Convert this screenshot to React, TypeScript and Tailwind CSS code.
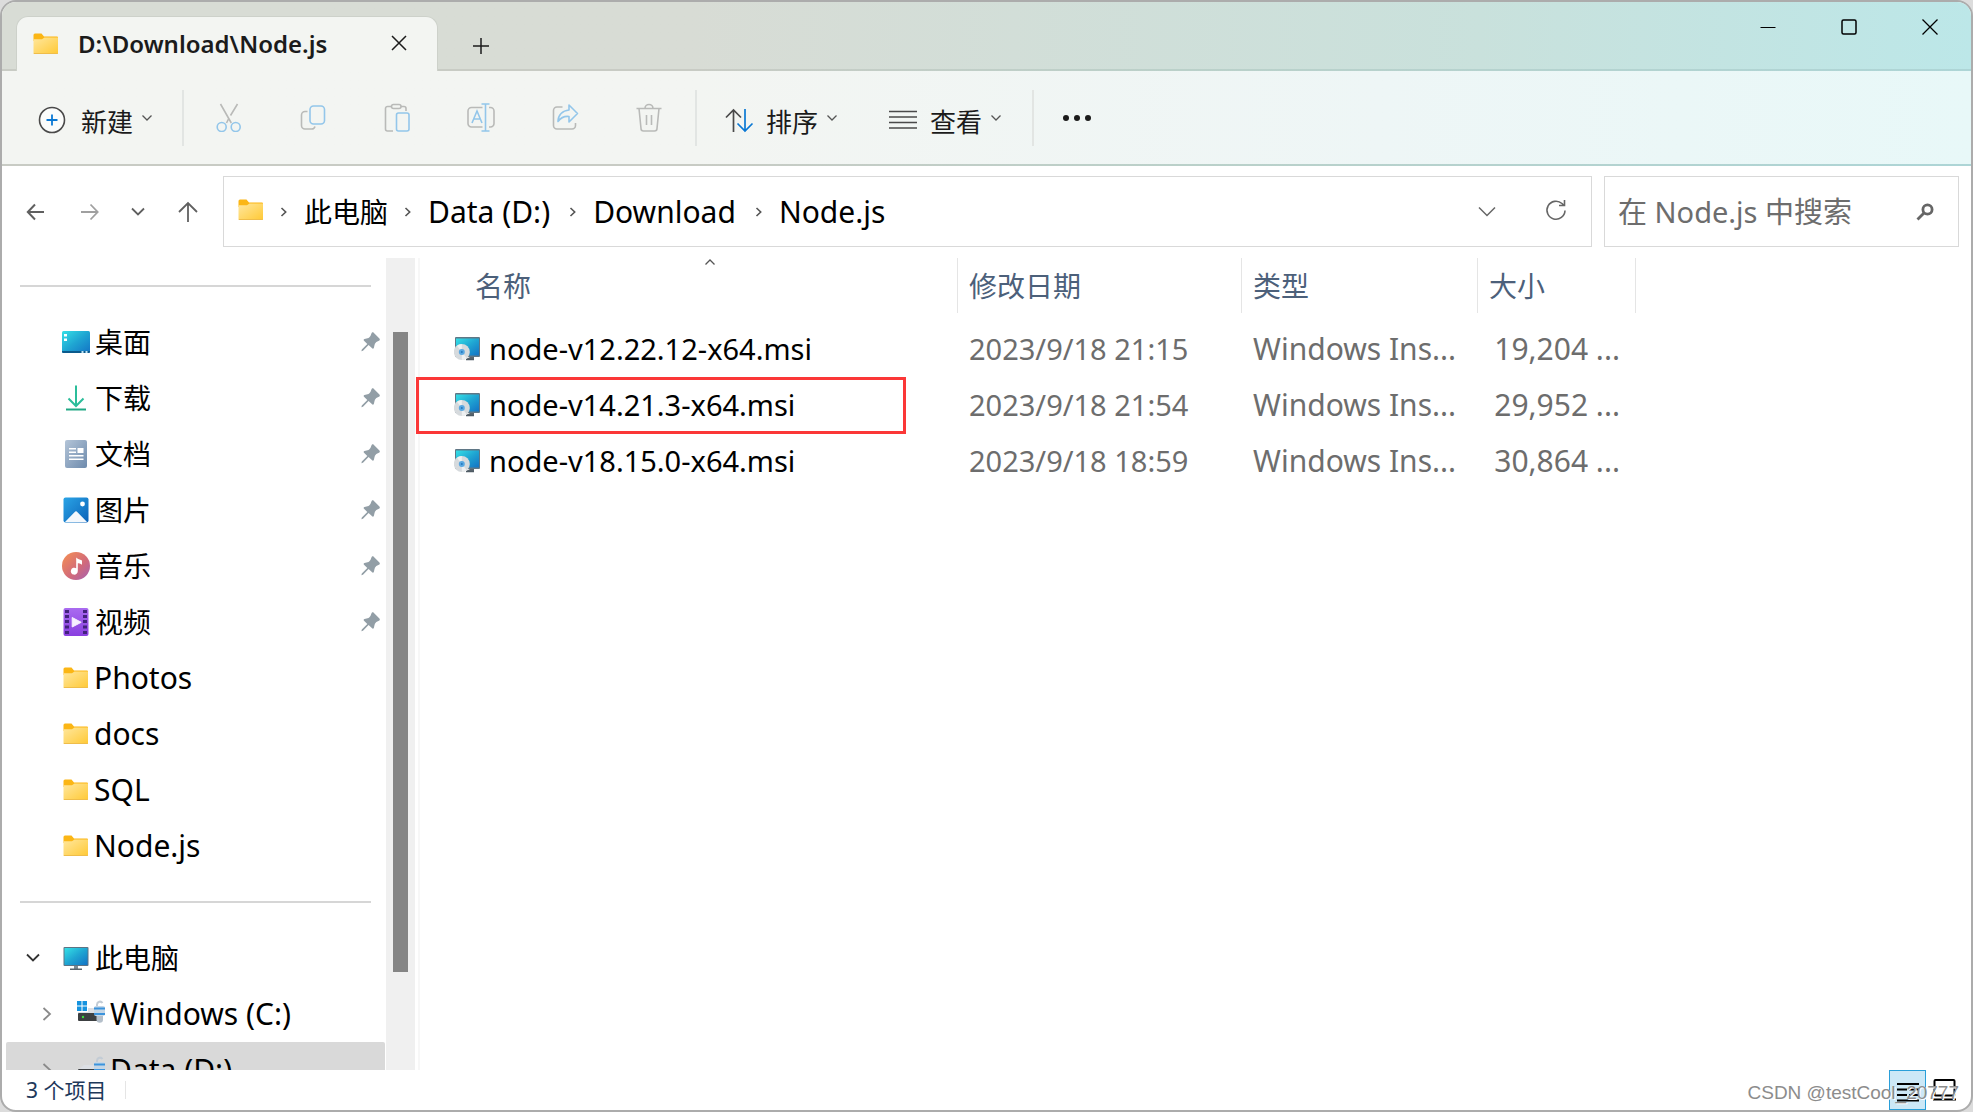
import React from 'react';

type P = { className?: string };

const Folder = ({ className = '' }: P) => (
  <svg className={className} width="26" height="22" viewBox="0 0 26 22" aria-hidden="true">
    <defs>
      <linearGradient id="fold" x1="0" y1="0" x2="1" y2="1">
        <stop offset="0" stopColor="#ffe79e" />
        <stop offset="1" stopColor="#ffc935" />
      </linearGradient>
    </defs>
    <path d="M0.5 3V2a1.5 1.5 0 0 1 1.500-1.500h6.500l2.500 3h13a1 1 0 0 1 1 1V8H.5z" fill="#fbb615" />
    <path d="M.5 6.200h8.500l2.500-1.700h13.500v15.500a1 1 0 0 1-1 1H1.500a1 1 0 0 1-1-1z" fill="url(#fold)" />
    <path d="M.8 20.500h24" stroke="#efbd4a" strokeWidth="1" />
  </svg>
);

const DesktopIcon = () => (
  <svg width="28" height="28" viewBox="0 0 28 28" aria-hidden="true">
    <defs>
      <linearGradient id="desk" x1="0" y1="0" x2="1" y2="1">
        <stop offset="0" stopColor="#35e0e6" />
        <stop offset=".5" stopColor="#1fa5d2" />
        <stop offset="1" stopColor="#1373c5" />
      </linearGradient>
    </defs>
    <rect x="0" y="3" width="28" height="22" rx="1.500" fill="url(#desk)" />
    <path d="M0 23h28v.5a1.500 1.500 0 0 1-1.500 1.500h-25A1.500 1.500 0 0 1 0 23.500z" fill="#0b5a8c" />
    <path d="M2 6h3v2.500H2zM2 10.500h3V13H2z" fill="#fff" />
    <path d="M19.500 23h2v2h-2zM23.500 23h2v2h-2z" fill="#bfe6f7" />
  </svg>
);

const DownloadIcon = () => (
  <svg width="28" height="28" viewBox="0 0 28 28" fill="none" stroke="#2bbd9a" strokeWidth="2" aria-hidden="true">
    <path d="M14 1.500v20M6.500 14.500l7.500 7.500 7.500-7.500" />
    <path d="M4 25.500h20" stroke="#21a884" />
  </svg>
);

const DocIcon = () => (
  <svg width="28" height="28" viewBox="0 0 28 28" aria-hidden="true">
    <defs>
      <linearGradient id="doc" x1="0" y1="0" x2="1" y2="1">
        <stop offset="0" stopColor="#b4c5d8" />
        <stop offset="1" stopColor="#6d8aac" />
      </linearGradient>
    </defs>
    <rect x="3" y="0" width="22" height="28" rx="2" fill="url(#doc)" />
    <path d="M7 8h7v1.500H7zM7 11.500h7V13H7zM15.500 8h6v5h-6zM7 15h14.500v1.500H7zM7 18.500h14.500V20H7z" fill="#fff" />
  </svg>
);

const PictureIcon = () => (
  <svg width="28" height="28" viewBox="0 0 28 28" aria-hidden="true">
    <defs>
      <linearGradient id="pic" x1="0" y1="0" x2="1" y2="1">
        <stop offset="0" stopColor="#2aa4e6" />
        <stop offset="1" stopColor="#0c62b8" />
      </linearGradient>
    </defs>
    <rect x="1.500" y="1.500" width="25" height="25" rx="2" fill="url(#pic)" />
    <path d="M3 26l9.500-9.800a2 2 0 0 1 3 0L25 26z" fill="#f4f8fc" />
    <circle cx="20.500" cy="8" r="2.400" fill="#fff" />
  </svg>
);

const MusicIcon = () => (
  <svg width="28" height="28" viewBox="0 0 28 28" aria-hidden="true">
    <defs>
      <linearGradient id="mus" x1="0" y1="0" x2="1" y2="1">
        <stop offset=".1" stopColor="#f08a58" />
        <stop offset=".6" stopColor="#d0697c" />
        <stop offset="1" stopColor="#a461b4" />
      </linearGradient>
    </defs>
    <circle cx="14" cy="14" r="14" fill="url(#mus)" />
    <path d="M14.200 5.500c1.500 1.800 3.500 1.600 5.800 3v4.200c-1.700-1.200-3-1.400-4.200-1.500V19a3.500 3.500 0 1 1-1.600-2.800z" fill="#fff" />
  </svg>
);

const VideoIcon = () => (
  <svg width="28" height="28" viewBox="0 0 28 28" aria-hidden="true">
    <defs>
      <linearGradient id="vid" x1="0" y1="0" x2="0" y2="1">
        <stop offset="0" stopColor="#a96bf0" />
        <stop offset="1" stopColor="#8a3fe0" />
      </linearGradient>
    </defs>
    <rect x="1.500" y="0" width="25" height="28" rx="2" fill="url(#vid)" />
    <path
      d="M3 2h4v3H3zM3 7h4v3H3zM3 12h4v3H3zM3 17.500h4v3H3zM3 23h4v3H3zM21 2h4v3h-4zM21 7h4v3h-4zM21 12h4v3h-4zM21 17.500h4v3h-4zM21 23h4v3h-4z"
      fill="#42227c"
    />
    <path d="M10.200 9.500v9.500l9-4.700z" fill="#f6effe" stroke="#f6effe" strokeLinejoin="round" />
  </svg>
);

const ComputerIcon = () => (
  <svg width="28" height="28" viewBox="0 0 28 28" aria-hidden="true">
    <rect x="1.500" y="3" width="25" height="19" rx="1" fill="#5d7384" />
    <rect x="2.500" y="4" width="23" height="17" fill="url(#desk)" />
    <path d="M12 22h4v3h-4z" fill="#7d8a94" />
    <path d="M8 24.500h12v1.500H8z" fill="#59656e" />
  </svg>
);

const DriveIcon = ({ win = false }: { win?: boolean }) => (
  <svg width="28" height="28" viewBox="0 0 28 28" aria-hidden="true">
    {win && <path d="M0 1h4.500v4.500H0zM5.500 1H10v4.500H5.500zM0 6.500h4.500V11H0zM5.500 6.500H10V11H5.500z" fill="#1593df" />}
    <path d={win ? 'M11 8h8v6H1v-2h10z' : 'M7 9h12l5 5H1z'} fill="#dcdfe4" />
    <rect x="1" y="13" width="21" height="8" rx="1" fill="#3c3f41" />
    <circle cx="6" cy="17" r="1.200" fill="#3ddc3d" />
    <path d="M20 7V4.500a3 3 0 0 1 5.500-1.500" fill="none" stroke="#c3ccd5" strokeWidth="2" />
    <rect x="17" y="6" width="11" height="10" rx="2" fill="#c4d6e6" />
    <path d="M17 7.500h11v2H17zM17 13h11v2H17z" fill="#3b93dc" />
    <path d="M19.500 16h6.500v3.500a3.200 3.200 0 0 1-6.500 0z" fill="#b4bfca" />
  </svg>
);

const MsiIcon = () => (
  <svg width="26" height="26" viewBox="0 0 26 26" aria-hidden="true">
    <rect x="1" y="1" width="25" height="20" rx="1" fill="#5f7786" />
    <rect x="2" y="2.500" width="23" height="17" fill="url(#desk)" />
    <path d="M12 23h8v-2h-4z" fill="#59656e" />
    <path d="M12 23.500h8" stroke="#4f5b64" strokeWidth="1.500" />
    <circle cx="7.800" cy="16" r="8" fill="#d6dadd" />
    <path d="M7.800 16L3 9.800A8 8 0 0 1 7.800 8zM7.800 16l5 6.200A8 8 0 0 1 7.800 24z" fill="#eef0f1" />
    <circle cx="7.800" cy="16" r="3" fill="#58a8e2" />
    <circle cx="7.800" cy="16" r="1" fill="#2678bd" />
  </svg>
);

const Pin = () => (
  <svg width="20" height="20" viewBox="0 0 20 20" aria-hidden="true">
    <path
      d="M10.800.8c.6-.6 1.300-.6 1.900 0l5.700 5.600c.6.600.6 1.500 0 2l-1 .6c-1.500.5-2.800 1.500-3.500 2.800-.5 1.300-.6 2.700-1 4-.3.900-1.200 1.100-1.800.5L7.600 13 2 18.800.4 19.300.8 17.600 6.300 11.900 3 8.700c-.6-.6-.4-1.500.5-1.700 1.400-.3 2.800-.4 4-1C8.900 5.200 9.800 3.700 10.200 2z"
      fill="#929ea6"
    />
  </svg>
);

const Chevron = ({ className = '' }: P) => (
  <svg className={className} width="12" height="8" viewBox="0 0 12 8" fill="none" stroke="currentColor" strokeWidth="1.300" aria-hidden="true">
    <path d="M1.500 1.500L6 6l4.500-4.500" />
  </svg>
);

const Crumb = () => (
  <svg width="8" height="12" viewBox="0 0 8 12" fill="none" stroke="#555" strokeWidth="1.600" aria-hidden="true">
    <path d="M1.500 2l4.200 4-4.200 4" />
  </svg>
);

const gray = '#b9bab8';
const sky = '#93c6ea';

const tools: { label: string; art: React.ReactNode }[] = [
  {
    label: '剪切',
    art: (
      <>
        <path d="M5.500 1l10.800 19M22.500 1l-7 11.500M13.500 16l-2 4" stroke={gray} />
        <circle cx="6.700" cy="24" r="4.500" stroke={sky} />
        <circle cx="20.700" cy="24" r="4.500" stroke={sky} />
      </>
    ),
  },
  {
    label: '复制',
    art: (
      <>
        <path d="M8.500 8.500H6a3.500 3.500 0 0 0-3.500 3.500v10.500A3.500 3.500 0 0 0 6 26h6.500a3.500 3.500 0 0 0 3.500-2.500" stroke={gray} />
        <rect x="11" y="3" width="14.500" height="18" rx="3.500" stroke={sky} />
      </>
    ),
  },
  {
    label: '粘贴',
    art: (
      <>
        <path d="M8.500 3.500H4.500a2 2 0 0 0-2 2V26a2 2 0 0 0 2 2H10M18 3.500h3a2 2 0 0 1 2 2V8" stroke={gray} />
        <rect x="8.500" y="1.500" width="9.500" height="4" rx="2" stroke={gray} />
        <rect x="13.500" y="10" width="12.500" height="18" rx="2" stroke={sky} />
      </>
    ),
  },
  {
    label: '重命名',
    art: (
      <>
        <path d="M15.500 4.500H4.500A3.500 3.500 0 0 0 1 8v12.500A3.500 3.500 0 0 0 4.500 24h11M22 4.500h1.500A3.500 3.500 0 0 1 27 8v12.500a3.500 3.500 0 0 1-3.500 3.500H22" stroke={gray} />
        <path d="M18.500 1v27M14.500 1h8M14.500 28h8M5 20l5-12 5 12M6.800 16h6.500" stroke={sky} />
      </>
    ),
  },
  {
    label: '共享',
    art: (
      <>
        <path d="M11.500 4H6a3.500 3.500 0 0 0-3.500 3.500v15A3.500 3.500 0 0 0 6 26h15a3.500 3.500 0 0 0 3.500-3.500V20" stroke={gray} />
        <path d="M18 2l8.500 8.500L18 19v-5.500c-4-.5-8 1-11 5C7 12 11.500 7.500 18 7z" stroke={sky} strokeLinejoin="round" />
      </>
    ),
  },
  {
    label: '删除',
    art: (
      <>
        <path d="M1.500 5.500h25M10 5.500a4 4 0 0 1 8 0M4 5.500l2 20a2.500 2.500 0 0 0 2.500 2.500h11a2.500 2.500 0 0 0 2.500-2.500l2-20M11.500 12v10M16.500 12v10" stroke={gray} />
      </>
    ),
  },
];

const cjk = 'text-[28px] leading-10';
const latin = 'text-[30px] leading-10';

const quick = [
  { name: '桌面', icon: <DesktopIcon /> },
  { name: '下载', icon: <DownloadIcon /> },
  { name: '文档', icon: <DocIcon /> },
  { name: '图片', icon: <PictureIcon /> },
  { name: '音乐', icon: <MusicIcon /> },
  { name: '视频', icon: <VideoIcon /> },
];
const folders = ['Photos', 'docs', 'SQL', 'Node.js'];

const files = [
  { name: 'node-v12.22.12-x64.msi', date: '2023/9/18 21:15', type: 'Windows Ins...', size: '19,204 ...' },
  { name: 'node-v14.21.3-x64.msi', date: '2023/9/18 21:54', type: 'Windows Ins...', size: '29,952 ...', marked: true },
  { name: 'node-v18.15.0-x64.msi', date: '2023/9/18 18:59', type: 'Windows Ins...', size: '30,864 ...' },
];

const Rule = () => (
  <div className="flex h-14 shrink-0 items-center pr-[14px] pl-[18px]">
    <hr className="w-full border-0 border-t-2 border-[#d6d6d6]" />
  </div>
);

const Edge = () => <div className="h-[2px] shrink-0 bg-linear-to-r from-[#c8cbc4] from-35% via-[#bad0c9] via-60% to-[#add5d6]" />;

const TitleBar = () => (
  <header className="flex shrink-0 flex-col bg-linear-to-r from-[#d8dcd5] from-35% via-[#c9e1dc] via-75% to-[#bce7e8]">
    <div className="flex h-[67px]">
      <div className="relative z-10 mt-[14px] -mb-[2px] ml-[14px] flex w-[422px] items-center rounded-t-xl border-x border-t border-[#cdd1ca] bg-[#f3f5f2] pr-7 pl-4">
        <Folder className="shrink-0" />
        <h1 className="ml-[19px] flex-1 text-[24px] leading-8 font-semibold text-[#1b1b1b]">D:\Download\Node.js</h1>
        <button type="button" aria-label="关闭标签页">
          <svg width="20" height="20" viewBox="0 0 20 20" stroke="#1b1b1b" strokeWidth="1.500">
            <path d="M3 2l14 14M17 2L3 16" />
          </svg>
        </button>
      </div>
      <button type="button" aria-label="新建标签页" className="ml-8 pt-5">
        <svg width="22" height="22" viewBox="0 0 22 22" stroke="#1b1b1b" strokeWidth="1.500">
          <path d="M3 11h16M11 3v16" />
        </svg>
      </button>
      <div className="ml-auto flex h-[49px] items-center pr-px">
        <button type="button" aria-label="最小化" className="flex w-[81px] justify-center">
          <svg width="16" height="16" viewBox="0 0 16 16" stroke="#000">
            <path d="M.5 8.500h15" />
          </svg>
        </button>
        <button type="button" aria-label="最大化" className="flex w-[81px] justify-center">
          <svg width="16" height="16" viewBox="0 0 16 16" stroke="#000" fill="none" strokeWidth="1.500">
            <rect x="1" y="1" width="14" height="14" rx="1.500" />
          </svg>
        </button>
        <button type="button" aria-label="关闭" className="flex w-[81px] justify-center">
          <svg width="16" height="16" viewBox="0 0 16 16" stroke="#000" strokeWidth="1.300">
            <path d="M.5.5l15 15M15.500.5l-15 15" />
          </svg>
        </button>
      </div>
    </div>
    <Edge />
  </header>
);

const Sep = () => <div className="h-14 w-[2px] shrink-0 bg-[#e2e5e3]" />;

const Toolbar = () => (
  <div className="shrink-0">
    <div
      role="toolbar"
      aria-label="命令栏"
      className="flex h-[93px] items-center bg-linear-to-r from-[#f3f5f2] from-35% via-[#eef6f6] via-70% to-[#e8f8f8] pl-9 text-[26px] leading-9 text-[#1b1b1b]"
    >
      <button type="button" className="flex items-center pt-1">
        <svg width="28" height="28" viewBox="0 0 28 28" fill="none" strokeWidth="1.600">
          <circle cx="14" cy="14" r="12.500" fill="#fbfcfb" stroke="#4a4a4a" />
          <path d="M14 8.500v11M8.500 14h11" stroke="#0a78d4" strokeWidth="1.800" />
        </svg>
        <span className="mt-1 ml-[15px]">新建</span>
        <Chevron className="mb-1 ml-2 text-[#555]" />
      </button>
      <div className="ml-[29px]">
        <Sep />
      </div>
      <div className="ml-[31px] flex gap-14">
        {tools.map((t) => (
          <button key={t.label} type="button" aria-label={t.label} disabled>
            <svg width="28" height="29" viewBox="0 0 28 29" fill="none" strokeWidth="1.600">
              {t.art}
            </svg>
          </button>
        ))}
      </div>
      <div className="ml-8">
        <Sep />
      </div>
      <button type="button" className="ml-[27px] flex items-center pt-1">
        <svg width="30" height="26" viewBox="0 0 30 26" fill="none" strokeWidth="1.700">
          <path d="M9.500 25V3M2 10.500L9.500 3l7.500 7.500" stroke="#4a4a4a" />
          <path d="M21 2v22M13.500 16.500L21 24l7.500-7.500" stroke="#0a78d4" />
        </svg>
        <span className="mt-1 ml-3">排序</span>
        <Chevron className="mb-1 ml-2 text-[#555]" />
      </button>
      <button type="button" className="ml-[51px] flex items-center pt-1">
        <svg width="28" height="20" viewBox="0 0 28 20" stroke="#4a4a4a" strokeWidth="1.500">
          <path d="M0 1.500h28M0 7h28M0 12.500h28M0 18h28" />
        </svg>
        <span className="mt-1 ml-[13px]">查看</span>
        <Chevron className="mb-1 ml-2 text-[#555]" />
      </button>
      <div className="ml-[30px]">
        <Sep />
      </div>
      <button type="button" aria-label="更多" className="ml-7">
        <svg width="30" height="8" viewBox="0 0 30 8" fill="#1b1b1b">
          <circle cx="4" cy="4" r="3" />
          <circle cx="15" cy="4" r="3" />
          <circle cx="26" cy="4" r="3" />
        </svg>
      </button>
    </div>
    <Edge />
  </div>
);

const AddressRow = () => (
  <div className="flex shrink-0 items-center pt-[10px] pr-3 pb-[11px] pl-6">
    <nav aria-label="导航" className="flex w-[197px] shrink-0 items-center">
      <button type="button" aria-label="后退">
        <svg width="20" height="20" viewBox="0 0 20 20" fill="none" stroke="#606060" strokeWidth="2">
          <path d="M18 10H2M9 2.500L1.800 10 9 17.500" />
        </svg>
      </button>
      <button type="button" aria-label="前进" className="ml-[34px]">
        <svg width="20" height="20" viewBox="0 0 20 20" fill="none" stroke="#a0a0a0" strokeWidth="1.800">
          <path d="M1 10h17M10.500 2.500l7.200 7.500-7.200 7.500" />
        </svg>
      </button>
      <button type="button" aria-label="最近位置" className="ml-[31px]">
        <svg width="14" height="10" viewBox="0 0 14 10" fill="none" stroke="#606060" strokeWidth="1.800">
          <path d="M1 1.500l6 6 6-6" />
        </svg>
      </button>
      <button type="button" aria-label="向上" className="ml-8">
        <svg width="22" height="22" viewBox="0 0 22 22" fill="none" stroke="#606060" strokeWidth="1.800">
          <path d="M11 21V2M2 11l9-9 9 9" />
        </svg>
      </button>
    </nav>
    <div className="flex h-[71px] min-w-0 flex-1 items-center border border-[#d9d9d9] pr-4 pl-[14px]">
      <Folder className="mb-1 shrink-0" />
      <div className="ml-4 flex items-center gap-4 whitespace-nowrap">
        <Crumb />
        <a href="#pc" className={cjk}>此电脑</a>
        <Crumb />
        <a href="#data" className={latin}>Data (D:)</a>
        <span className="ml-[3px]">
          <Crumb />
        </span>
        <a href="#download" className={latin}>Download</a>
        <span className="ml-[3px]">
          <Crumb />
        </span>
        <a href="#node" className={latin}>Node.js</a>
      </div>
      <button type="button" aria-label="历史记录" className="ml-auto">
        <svg width="18" height="12" viewBox="0 0 18 12" fill="none" stroke="#666" strokeWidth="1.500">
          <path d="M1 1.500l8 8 8-8" />
        </svg>
      </button>
      <button type="button" aria-label="刷新" className="mr-2 mb-1 ml-[49px]">
        <svg width="22" height="22" viewBox="0 0 22 22" fill="none" stroke="#666" strokeWidth="1.600">
          <path d="M20 11.500A9 9 0 1 1 17 4.500l2 2M19.500 1v5.500H14" />
        </svg>
      </button>
    </div>
    <div className="ml-3 flex h-[71px] w-[355px] shrink-0 items-center border border-[#d9d9d9] pr-6 pl-[13px]">
      <input
        type="search"
        aria-label="搜索"
        placeholder="在 Node.js 中搜索"
        className="min-w-0 flex-1 text-[29px] leading-10 outline-none placeholder:text-[#6d6d6d]"
      />
      <svg width="18" height="18" viewBox="0 0 18 18" fill="none" stroke="#666" strokeWidth="2.800" aria-hidden="true">
        <circle cx="11.500" cy="6.500" r="4.600" />
        <path d="M8 10l-6.500 6.500" />
      </svg>
    </div>
  </div>
);

const TreeRight = () => (
  <svg width="10" height="14" viewBox="0 0 10 14" fill="none" stroke="#8a8a8a" strokeWidth="1.800" aria-hidden="true">
    <path d="M1.500 1l6.500 6-6.500 6" />
  </svg>
);

const Sidebar = () => (
  <aside className="flex w-[413px] shrink-0">
    <nav aria-label="文件夹" className="flex min-w-0 flex-1 flex-col overflow-hidden whitespace-nowrap">
      <Rule />
      {quick.map((q) => (
        <a key={q.name} href={'#' + q.name} className="flex h-14 shrink-0 items-center pr-1 pl-[60px]">
          {q.icon}
          <span className={'ml-[5px] flex-1 ' + cjk}>{q.name}</span>
          <Pin />
        </a>
      ))}
      {folders.map((f) => (
        <a key={f} href={'#' + f} className="flex h-14 shrink-0 items-center pl-[61px]">
          <Folder />
          <span className={'ml-[5px] ' + latin}>{f}</span>
        </a>
      ))}
      <Rule />
      <a href="#pc" className="flex h-14 shrink-0 items-center pl-6">
        <svg width="14" height="10" viewBox="0 0 14 10" fill="none" stroke="#333" strokeWidth="1.800" aria-hidden="true">
          <path d="M1 1.500l6 6 6-6" />
        </svg>
        <span className="ml-[22px]">
          <ComputerIcon />
        </span>
        <span className={'ml-[5px] ' + cjk}>此电脑</span>
      </a>
      <a href="#c" className="flex h-14 shrink-0 items-center pl-10">
        <TreeRight />
        <span className="ml-[25px]">
          <DriveIcon win />
        </span>
        <span className={'ml-[5px] ' + latin}>Windows (C:)</span>
      </a>
      <a href="#data" className="ml-1 flex h-14 shrink-0 items-center rounded-xs bg-[#d9d9d9] pl-9">
        <TreeRight />
        <span className="ml-[25px]">
          <DriveIcon />
        </span>
        <span className={'ml-[5px] ' + latin}>Data (D:)</span>
      </a>
    </nav>
    <div className="ml-px flex w-[29px] shrink-0 justify-center bg-[#f0f0f0] pt-[74px] pb-[98px]">
      <div className="w-[15px] bg-[#858585]" />
    </div>
  </aside>
);

const th = 'h-[55px] border-r border-[#e5e5e5] pl-[11px] text-left text-[28px] leading-10 font-normal text-[#4c607a]';

const FileTable = () => (
  <main className="ml-[3px] min-w-0 flex-1 border-l-2 border-[#f7f7f7]">
    <table className="w-[1216px] table-fixed border-separate border-spacing-0 whitespace-nowrap">
      <colgroup>
        <col className="w-[538px]" />
        <col className="w-[284px]" />
        <col className="w-[236px]" />
        <col className="w-[158px]" />
      </colgroup>
      <thead>
        <tr>
          <th scope="col" className="relative h-[55px] border-r border-[#e5e5e5] pl-[55px] text-left text-[28px] leading-10 font-normal text-[#4c607a]">
            名称
            <Chevron className="absolute top-0 left-[284px] rotate-180 text-[#555]" />
          </th>
          <th scope="col" className={th}>修改日期</th>
          <th scope="col" className={th}>类型</th>
          <th scope="col" className={th}>大小</th>
        </tr>
      </thead>
      <tbody className="before:block before:h-2">
        {files.map((f) => (
          <tr key={f.name}>
            <td className="relative h-14 pl-[34px]">
              <div className="flex items-center">
                <MsiIcon />
                <span className="ml-[9px] text-[29px] leading-10">{f.name}</span>
              </div>
              {f.marked && <div className="absolute top-0 -left-1 h-[57px] w-[490px] border-3 border-[#fb3737]" />}
            </td>
            <td className="pl-[11px] text-[29px] leading-10 text-[#6d6d6d]">{f.date}</td>
            <td className="pl-[11px] text-[30px] leading-10 text-[#6d6d6d]">{f.type}</td>
            <td className="pr-4 text-right text-[30px] leading-10 text-[#6d6d6d]">{f.size}</td>
          </tr>
        ))}
      </tbody>
    </table>
  </main>
);

const StatusBar = () => (
  <footer className="relative flex h-10 shrink-0 items-center pr-[15px] pl-6">
    <span className="text-[21px] leading-7 text-[#1e395b]">3 个项目</span>
    <div className="ml-[19px] h-[18px] w-px bg-[#e5e5e5]" />
    <button type="button" aria-label="详细信息" className="ml-auto flex h-10 w-[37px] items-center justify-center border border-[#2a9fd9] bg-[#cce8f7] pt-1">
      <svg width="22" height="20" viewBox="0 0 22 20" stroke="#000" strokeWidth="2">
        <path d="M0 2h22M0 7.500h10M12 7.500h10M0 13h10M12 13h10M0 18.500h22" />
      </svg>
    </button>
    <button type="button" aria-label="大图标" className="ml-[7px]">
      <svg width="23" height="22" viewBox="0 0 23 22" stroke="#000" strokeWidth="2" fill="none">
        <rect x="1.500" y="1" width="20" height="15.500" rx="1" />
        <path d="M0 20.500h23" />
      </svg>
    </button>
    <span className="pointer-events-none absolute right-3 bottom-[3px] font-['Liberation_Sans'] text-[19px] leading-7 text-[#8c8c8c] text-shadow-[1px_1px_0_#ffffff]">
      CSDN @testCool_20777
    </span>
  </footer>
);

export default function App() {
  return (
    <div className="h-screen bg-[#dcdcdc] font-['Noto_Sans','Noto_Sans_CJK_SC',sans-serif] text-black">
      <div className="flex h-full flex-col overflow-hidden rounded-2xl border-2 border-[#acacac] bg-white">
        <TitleBar />
        <Toolbar />
        <AddressRow />
        <div className="flex min-h-0 flex-1">
          <Sidebar />
          <FileTable />
        </div>
        <StatusBar />
      </div>
    </div>
  );
}
